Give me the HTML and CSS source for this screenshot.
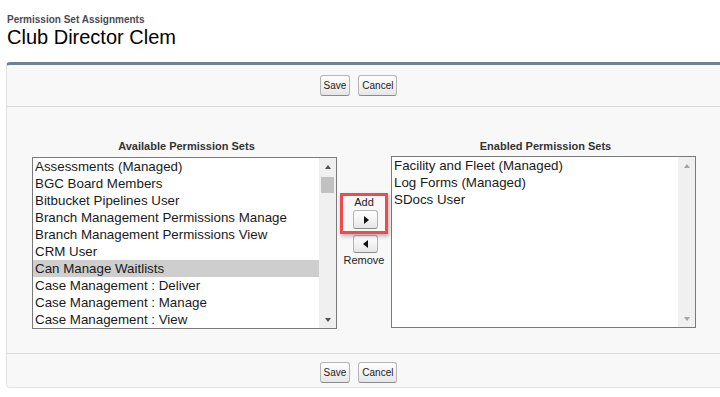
FILE: index.html
```html
<!DOCTYPE html>
<html lang="en">
  <head>
    <meta charset="UTF-8" />
    <meta name="viewport" content="width=device-width, initial-scale=1.0" />
    <title>Permission Set Assignments</title>
    <link rel="stylesheet" href="styles.css">
  </head>
  <body>
    <div class="page-header">
      <div class="page-type">Permission Set Assignments</div>
      <h1 class="page-title">Club Director Clem</h1>
    </div>

    <div class="panel">
      <div class="btn-row top">
        <button class="btn">Save</button>
        <button class="btn">Cancel</button>
      </div>

      <div class="dual-list">
        <div class="col">
          <div class="col-label">Available Permission Sets</div>
          <div class="listbox">
            <div class="options">
              <div class="option">Assessments (Managed)</div>
              <div class="option">BGC Board Members</div>
              <div class="option">Bitbucket Pipelines User</div>
              <div class="option">Branch Management Permissions Manage</div>
              <div class="option">Branch Management Permissions View</div>
              <div class="option">CRM User</div>
              <div class="option selected">Can Manage Waitlists</div>
              <div class="option">Case Management : Deliver</div>
              <div class="option">Case Management : Manage</div>
              <div class="option">Case Management : View</div>
            </div>
            <div class="scrollbar">
              <div class="arrow up"></div>
              <div class="track"><div class="thumb"></div></div>
              <div class="arrow down"></div>
            </div>
          </div>
        </div>

        <div class="col-mid">
          <div class="mid-label">Add</div>
          <button class="arrow-btn"><span class="tri right"></span></button>
          <button class="arrow-btn second"><span class="tri left"></span></button>
          <div class="mid-label">Remove</div>
          <div class="highlight"></div>
        </div>

        <div class="col enabled">
          <div class="col-label">Enabled Permission Sets</div>
          <div class="listbox">
            <div class="options">
              <div class="option">Facility and Fleet (Managed)</div>
              <div class="option">Log Forms (Managed)</div>
              <div class="option">SDocs User</div>
            </div>
            <div class="scrollbar disabled">
              <div class="arrow up"></div>
              <div class="track"></div>
              <div class="arrow down"></div>
            </div>
          </div>
        </div>
      </div>

      <div class="btn-row bottom">
        <button class="btn">Save</button>
        <button class="btn">Cancel</button>
      </div>
    </div>
  </body>
</html>
```

FILE: styles.css
```css
* {
  margin: 0;
  padding: 0;
  box-sizing: border-box;
}
html,
body {
  overflow: hidden;
}
body {
  font-family: "Liberation Sans", Arial, sans-serif;
  color: #222;
  background: #fff;
}
.page-header {
  padding: 14px 7px 0;
}
.page-type {
  font-size: 10px;
  line-height: 11px;
  font-weight: bold;
  color: #4a4a56;
}
.page-title {
  font-size: 20px;
  line-height: 24px;
  font-weight: normal;
  color: #000;
}
.panel {
  margin: 13px 0 0 6px;
  width: 740px;
  background: #f8f8f8;
  border-top: 3px solid #747e96;
  border-left: 1px solid #e0e3e5;
  border-bottom: 1px solid #e0e3e5;
  border-radius: 4px 0 0 4px;
}
.btn-row {
  display: flex;
  justify-content: center;
  gap: 8px;
}
.btn-row.top {
  padding: 10px 36px 10px 0;
  border-bottom: 1px solid #dbdbdb;
}
.btn-row.bottom {
  padding: 8px 36px 4px 0;
  border-top: 1px solid #dbdbdb;
}
.btn {
  font-family: "Liberation Sans", Arial, sans-serif;
  font-size: 10px;
  line-height: 19px;
  height: 21px;
  padding: 0 3px;
  color: #222;
  border: 1px solid #b5b5b5;
  border-bottom-color: #8a8a8a;
  border-radius: 3px;
  background: linear-gradient(#ffffff, #f1f1f1 60%, #e6e6e6);
}
.dual-list {
  display: flex;
  padding: 33px 0 24px 25px;
}
.col {
  width: 305px;
  display: flex;
  flex-direction: column;
  gap: 4px;
}
.col-label {
  font-size: 11px;
  line-height: 13px;
  font-weight: bold;
  color: #333;
  text-align: center;
  padding-left: 4px;
}
.listbox {
  display: flex;
  height: 172px;
  border: 1px solid #7a7a7a;
  background: #fff;
}
.enabled .listbox {
  margin-top: -1px;
}
.options {
  flex: 1;
}
.option {
  font-size: 13.33px;
  line-height: 17px;
  padding-left: 2px;
  color: #1a1a1a;
  white-space: nowrap;
}
.option.selected {
  background: #cecece;
}
.scrollbar {
  width: 17px;
  background: #f0f0f0;
  display: flex;
  flex-direction: column;
}
.scrollbar .arrow {
  height: 17px;
  display: flex;
  align-items: center;
  justify-content: center;
}
.scrollbar .arrow::before {
  content: "";
  border-left: 3.5px solid transparent;
  border-right: 3.5px solid transparent;
}
.scrollbar .up::before {
  border-bottom: 4px solid #505050;
}
.scrollbar .down::before {
  border-top: 4px solid #505050;
}
.scrollbar.disabled .up::before {
  border-bottom-color: #a3a3a3;
}
.scrollbar.disabled .down::before {
  border-top-color: #a3a3a3;
}
.track {
  flex: 1;
  padding: 2px 2px 0;
}
.thumb {
  height: 16px;
  background: #c1c1c1;
}
.col-mid {
  position: relative;
  width: 54px;
  display: flex;
  flex-direction: column;
  align-items: center;
  padding-top: 56px;
}
.mid-label {
  font-size: 11px;
  line-height: 13px;
  color: #222;
}
.arrow-btn {
  width: 25px;
  height: 19px;
  margin-top: 1px;
  margin-left: 3px;
  display: flex;
  align-items: center;
  justify-content: center;
  border: 1px solid #b5b5b5;
  border-bottom-color: #8a8a8a;
  border-radius: 3px;
  background: linear-gradient(#ffffff, #f1f1f1 60%, #e6e6e6);
}
.arrow-btn.second {
  height: 18px;
  margin-top: 6px;
  margin-bottom: 1px;
}
.tri {
  border-top: 4.5px solid transparent;
  border-bottom: 4.5px solid transparent;
}
.tri.right {
  border-left: 5px solid #111;
  margin-left: 2px;
}
.tri.left {
  border-right: 5px solid #111;
}
.highlight {
  position: absolute;
  top: 53px;
  left: 3px;
  width: 48px;
  height: 41px;
  border: 3px solid #ee4a4f;
  box-shadow: 1px 2px 4px rgba(0, 0, 0, 0.3);
}
```
